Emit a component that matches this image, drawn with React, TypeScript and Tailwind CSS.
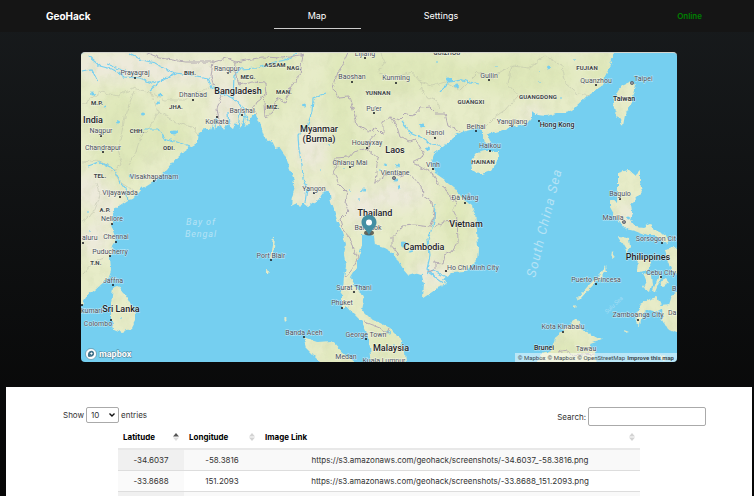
import React from "react";

type Anchor = "start" | "middle" | "end";
type Place = [name: string, x: number, y: number, anchor?: Anchor];

const LAND = [
  // Mainland, from the Indian coast round to Fujian
  "M78 48V307L82 305L88 295L95 290L103 283L109 276L111 270L110 257L116 237L112 225L113 212L117 207L128 200L133 199L142 188L155 180L167 170L177 157L183 152L190 147L197 143L199 133L205 129L210 129L212 124L214 129L222 125L224 130L227 124L233 129L236 121L239 129L243 120L246 127L250 122L252 115L257 115L260 122L263 133L267 142L272 141L276 149L280 148L285 155L287 160L289 167L293 177L295 188L292 197L291 206L297 203L300 207L303 203L308 207L313 203L318 200L322 194L325 190L330 193L331 202L334 210L337 220L342 232L346 245L344 255L346 265L344 277L343 288L341 295L341 305L343 309L347 306L353 313L362 322L367 333L370 347L372 365H406L405 352L400 338L390 328L378 322L370 318L362 310L364 300L360 292L353 283L351 277L357 267L359 255L362 245L362 235L368 234L374 236L375 245L385 248L392 252L397 258L402 268L408 275L414 273L422 275L424 284L423 298L432 292L437 288L446 285L443 279L452 273L465 272L477 260L478 248L477 230L475 215L472 205L462 198L455 188L445 180L435 173L431 162L435 152L445 145L452 137L462 132L478 128L483 131L483 140L487 144L490 140L488 135L498 132L512 127L528 123L532 118L532 110L538 115L547 116L556 113L565 113L575 107L588 95L603 85L605 76L608 70L615 52V48Z",
  // Hainan
  "M471 160L477 153L485 151L498 151L499 156L495 164L491 171L482 174L472 170Z",
  // Taiwan
  "M633 81L636 85L633 98L629 108L625 115L623 126L620 120L615 113L613 103L617 93L622 86Z",
  // Sri Lanka
  "M113 288L118 286L127 298L135 313L135 321L131 329L121 332L114 329L111 318L111 304Z",
  // Sumatra
  "M303 337L318 342L332 341L342 352L357 365H323L314 356L306 348Z",
  // Borneo
  "M535 365L542 353L552 350L555 338L565 330L572 322L577 319L582 328L591 334L602 340L590 344L595 352L597 365Z",
  // Luzon
  "M618 173L628 170L635 176L640 171L640 182L642 192L635 199L631 205L632 213L630 220L635 226L643 227L650 224L657 231L666 235L668 245L661 241L657 236L648 236L640 233L635 231L626 229L621 223L614 214L610 207L610 200L617 202L618 188Z",
  // Visayas and Mindoro
  "M618 237L629 238L630 248L627 252Z",
  "M638 258L649 258L652 263L647 270L637 273Z",
  "M643 273L651 275L652 285L650 292L643 287L646 281Z",
  "M659 275L661 278L655 292L653 290Z",
  "M660 282L666 279L669 283L662 286Z",
  "M664 250L680 247V276L672 270L668 262Z",
  // Mindanao
  "M680 291L672 295L669 305L661 306L657 297L650 299L641 304L637 313L636 323L640 326L642 314L649 310L655 312L662 308L663 320L668 329L680 333Z",
  // Palawan
  "M605 266L606 272L596 282L579 300L577 299L588 286L602 272Z",
  // Andaman and Nicobar
  "M273 237L275 240L272 259L270 258Z",
  "M267 270L270 271L269 274L267 273Z",
  "M284 317L287 319L285 321Z",
  "M612 252L615 256L611 259Z",
  "M574 305L576 307L574 308Z",
  "M624 330L629 332L625 333Z",
  "M661 356L664 355L666 359L663 360Z",
];

const PLAINS: [number, number, number, number][] = [
  [120, 66, 55, 15],
  [180, 72, 50, 14],
  [228, 105, 18, 24],
  [108, 208, 11, 16],
  [90, 190, 18, 18],
  [312, 148, 16, 22],
  [315, 196, 22, 11],
  [362, 208, 18, 18],
  [400, 195, 26, 14],
  [432, 274, 18, 13],
  [440, 138, 12, 9],
  [532, 114, 13, 8],
  [95, 240, 15, 18],
  [628, 215, 9, 14],
];

const HILLS: [number, number, number, number][] = [
  [120, 135, 28, 45],
  [165, 135, 26, 18],
  [272, 75, 22, 40],
  [342, 90, 16, 45],
  [400, 72, 70, 22],
  [520, 75, 55, 20],
  [345, 150, 18, 22],
  [455, 220, 14, 35],
  [395, 262, 10, 12],
  [600, 72, 15, 18],
  [385, 340, 12, 16],
  [565, 350, 20, 12],
  [335, 355, 12, 8],
];

const BORDERS = [
  "M140 50L160 58L185 62L213 62L226 58L236 62L235 72L239 85L252 82L265 83L266 95L256 102L253 108L257 115",
  "M213 62L211 76L214 88L222 96L217 108L220 126",
  "M236 62L262 57L283 58L305 54",
  "M303 54L300 75L290 88L286 102L277 97L272 112L265 118L264 104L265 95",
  "M349 50L342 66L338 72L333 88L338 97L349 96L354 112L357 125L368 132L377 128L383 134L383 122L391 118L400 120L406 114L415 115L421 108L430 107L436 113L445 113L448 126L462 132",
  "M391 118L397 127L400 137L410 142L415 140L423 152L421 158L413 162L422 168L432 173L438 183L445 188L449 197L457 202L453 210L457 218L458 242L452 252L445 255L443 264L435 262L435 270L427 272",
  "M377 132L368 142L368 150L378 158L376 172L375 184L388 173L400 176L408 173L414 180L422 185L423 196L432 202L434 218L430 227L415 225L402 226L397 233L392 237L392 246L398 255",
  "M368 148L353 152L349 157L335 158L337 166L333 172L339 184L347 192L345 202L349 211L340 220L343 230L350 238L353 248L358 258L353 267L345 277",
  "M364 322L372 325L380 328L387 333L389 328",
  "M558 352L567 350L572 356L582 355L595 354",
  "M434 227L444 222L454 221",
];

const STATES = [
  "M82 105L100 92L118 96L132 88L150 92L164 100L185 100L196 92L210 88",
  "M134 92L126 112L122 132L118 150L122 165L110 172",
  "M150 92L158 112L150 128L140 138L136 152L128 165",
  "M158 112L176 122L194 128L199 134",
  "M82 162L98 160L112 168L118 180L133 190",
  "M82 222L94 212L100 196L96 182",
  "M82 275L94 262L104 258",
  "M380 50L386 62L378 72L392 78L412 72L420 82L432 86L445 82L460 90L478 72L492 78L512 66L530 68L545 56",
  "M420 82L424 94L436 102L440 108",
  "M512 66L508 84L518 96L506 110L494 118L484 128",
  "M545 56L562 66L566 84L578 94L590 96",
];

const RIVERS = [
  "M88 56L100 66L115 70L124 77L140 78L152 83L165 79L175 73L192 75L208 78L212 88L224 94L232 98L240 104L245 111L248 122",
  "M130 54L142 60L155 63L168 70L177 74",
  "M106 64L122 70L138 75",
  "M150 90L162 80L176 74",
  "M297 53L286 60L275 62L258 68L240 69L234 76L233 98",
  "M143 129L158 129L164 138L178 142L190 147",
  "M88 166L100 162L112 168L118 178L126 189L128 200",
  "M326 93L313 98L312 112L308 124L298 135L299 150L302 165L303 178L307 188L305 203",
  "M402 122L412 134L422 138L432 145L445 147",
  "M435 205L434 222L428 240L430 255L427 268L436 278",
  "M440 92L450 82L462 80L478 84",
  "M82 72L92 70L97 80",
];

const DELTAS = [
  "M428 272L445 284",
  "M432 270L446 277",
  "M216 118L215 129",
  "M228 112L229 128",
  "M240 112L238 128",
  "M245 112L243 125",
];

const LAKES: [number, number, number][] = [
  [174, 133, 3], [157, 102, 2], [143, 114, 2], [118, 122, 2], [93, 94, 2],
  [105, 107, 2], [160, 95, 2], [101, 150, 1], [88, 121, 1], [131, 176, 2],
  [304, 105, 2], [384, 165, 2], [398, 166, 2], [396, 180, 2], [399, 187, 2],
  [363, 190, 2], [359, 200, 1], [380, 170, 1], [404, 245, 3], [411, 251, 2],
  [422, 125, 2], [427, 148, 2], [449, 80, 3], [457, 86, 2], [437, 62, 1],
  [548, 68, 2], [541, 71, 1], [575, 60, 1], [497, 66, 1], [521, 98, 1],
  [540, 82, 1], [350, 190, 1], [329, 145, 1], [344, 168, 1], [320, 170, 1],
  [628, 218, 2], [388, 332, 2], [394, 345, 1], [122, 318, 1], [102, 218, 1],
  [90, 231, 1], [88, 212, 1], [560, 98, 1], [500, 120, 1], [470, 98, 1],
];

const COUNTRIES: Place[] = [
  ["Bangladesh", 238, 94],
  ["India", 93, 123],
  ["Myanmar", 319, 132],
  ["(Burma)", 319, 142],
  ["Laos", 395, 153],
  ["Thailand", 375, 216],
  ["Vietnam", 466, 227],
  ["Cambodia", 424, 250],
  ["Sri Lanka", 121, 312],
  ["Malaysia", 391, 351],
  ["Philippines", 648, 260],
];

const TERRITORIES: Place[] = [
  ["Taiwan", 624, 101],
  ["Hong Kong", 557, 127],
  ["Brunei", 544, 350],
];

const REGIONS: Place[] = [
  ["BIH.", 190, 75], ["ASSAM", 275, 67], ["NAG.", 294, 70], ["MEG.", 248, 79],
  ["MAN.", 284, 94], ["MIZ.", 273, 109], ["JHA.", 176, 109], ["M.P.", 97, 105],
  ["CHH.", 137, 133], ["ODI.", 169, 150], ["TEL.", 100, 178], ["A.P.", 105, 212],
  ["T.N.", 96, 265], ["YUNNAN", 378, 95], ["GUANGXI", 471, 104],
  ["GUANGDONG", 538, 99], ["FUJIAN", 587, 70], ["HAINAN", 483, 164],
  ["GUIZHOU", 447, 55],
];

const CITIES: Place[] = [
  ["Prayagraj", 135, 75], ["Rangpur", 227, 71], ["Dhanbad", 193, 97],
  ["Barishal", 242, 113], ["Kolkata", 217, 124], ["Nagpur", 101, 133],
  ["Chandrapur", 103, 150], ["Visakhapatnam", 154, 179], ["Vijayawada", 120, 195],
  ["Nellore", 112, 221], ["Chennai", 116, 239], ["aluru", 82, 240, "start"],
  ["Puducherry", 110, 254], ["Jaffna", 113, 283], ["kumari", 81, 313, "start"],
  ["Colombo", 98, 326], ["Port Blair", 271, 258], ["Banda Aceh", 304, 335],
  ["Medan", 346, 359], ["George Town", 366, 337], ["Phuket", 342, 305],
  ["Surat Thani", 354, 290], ["Bangkok", 368, 230], ["Yangon", 314, 191],
  ["Chiang Mai", 350, 165], ["Houayxay", 367, 145], ["Vientiane", 395, 175],
  ["Baoshan", 352, 79], ["Kunming", 396, 80], ["Pu'er", 374, 111],
  ["Lijiang", 365, 56], ["Hanoi", 435, 135], ["Vinh", 433, 167],
  ["Đà Nẵng", 465, 200], ["Ho Chi Minh City", 447, 270, "start"],
  ["Guilin", 489, 78], ["Beihai", 476, 129], ["Yangjiang", 512, 124],
  ["Haikou", 490, 148], ["Quanzhou", 596, 83], ["Taipei", 634, 81, "start"],
  ["Baguio", 620, 196], ["Manila", 613, 220], ["Sorsogon Cit", 676, 241, "end"],
  ["Cebu City", 661, 275], ["Puerto Princesa", 596, 282],
  ["Zamboanga City", 638, 317], ["Da", 668, 315, "start"],
  ["B", 672, 291, "start"], ["Kuala Lumpur", 384, 363],
  ["Kota Kinabalu", 563, 329], ["Tawau", 586, 351],
];

const DOTS: [number, number][] = [
  [135, 78], [228, 73], [193, 100], [242, 115], [217, 117], [101, 136],
  [103, 152], [154, 181], [120, 197], [112, 224], [116, 242], [83, 243],
  [110, 256], [113, 285], [82, 305], [111, 320], [271, 260], [304, 337],
  [366, 339], [342, 308], [354, 292], [314, 193], [350, 167], [367, 148],
  [352, 82], [396, 83], [374, 113], [365, 58], [435, 138], [433, 169],
  [465, 203], [446, 271], [489, 80], [476, 131], [512, 126], [490, 151],
  [596, 85], [539, 121], [620, 199], [662, 243], [661, 277], [596, 284],
  [638, 320], [563, 332],
];

const CAPITALS: [number, number][] = [[632, 83], [394, 178], [624, 222]];

function Labels({ items, className }: { items: Place[]; className: string }) {
  return (
    <g className={className}>
      {items.map(([name, x, y, anchor]) => (
        <text key={name} x={x} y={y} textAnchor={anchor ?? "middle"}>
          {name}
        </text>
      ))}
    </g>
  );
}

function MapView() {
  return (
    <div className="relative overflow-hidden rounded border-t border-[#d5d5cf] bg-[#75cff0] font-['Roboto','Noto_Sans',sans-serif]">
      <svg
        viewBox="81 53 596 309"
        className="block w-full"
        role="img"
        aria-label="Map of Southeast Asia"
      >
        <defs>
          <filter id="coast" x="0" y="0" width="100%" height="100%">
            <feTurbulence type="fractalNoise" baseFrequency="0.16" numOctaves="3" seed="4" result="n" />
            <feDisplacementMap in="SourceGraphic" in2="n" scale="5" xChannelSelector="R" yChannelSelector="G" />
          </filter>
          <filter id="relief" x="0" y="0" width="100%" height="100%">
            <feTurbulence type="fractalNoise" baseFrequency="0.09 0.06" numOctaves="4" seed="9" />
            <feColorMatrix values="0 0 0 0 0.62  0 0 0 0 0.68  0 0 0 0 0.42  1.6 0 0 0 -0.68" />
          </filter>
          <filter id="soft">
            <feGaussianBlur stdDeviation="7" />
          </filter>
          <clipPath id="land">
            <path d={LAND.join("")} />
          </clipPath>
        </defs>
        <g filter="url(#coast)">
          <path d={LAND.join("")} fill="#e7ecc8" />
          <g clipPath="url(#land)">
            <g filter="url(#soft)">
              {HILLS.map(([x, y, rx, ry]) => (
                <ellipse key={`${x}-${y}`} cx={x} cy={y} rx={rx} ry={ry} fill="#dfe8ba" />
              ))}
              {PLAINS.map(([x, y, rx, ry]) => (
                <ellipse key={`${x}-${y}`} cx={x} cy={y} rx={rx} ry={ry} fill="#edeadb" />
              ))}
            </g>
            <rect x="81" y="50" width="600" height="315" filter="url(#relief)" opacity="0.5" />
          </g>
          <g fill="none" stroke="#b9bca8" strokeWidth="0.6" opacity="0.8">
            {STATES.map((d) => <path key={d} d={d} />)}
          </g>
          <g fill="none" stroke="#75cff0" strokeWidth="1.2">
            {RIVERS.map((d) => <path key={d} d={d} />)}
            {DELTAS.map((d) => <path key={d} d={d} />)}
          </g>
          <g fill="#75cff0">
            {LAKES.map(([x, y, r]) => (
              <ellipse key={`${x}-${y}`} cx={x} cy={y} rx={r} ry={r * 0.8} />
            ))}
          </g>
          <g fill="none" stroke="#b3aab4" strokeWidth="1">
            {BORDERS.map((d) => <path key={d} d={d} />)}
          </g>
        </g>

        <g className="fill-[#b5e3f5] text-[9px] italic tracking-widest">
          <text x="201" y="225" textAnchor="middle">Bay of</text>
          <text x="201" y="237" textAnchor="middle">Bengal</text>
        </g>
        <text
          className="fill-[#b5e3f5] text-[13px] italic tracking-widest"
          transform="translate(535 278) rotate(-76)"
        >
          South China Sea
        </text>
        <text className="fill-[#a5def5] text-[6px] italic" transform="translate(607 314) rotate(-43)">
          Sulu Sea
        </text>

        <g fill="#22262b">
          {DOTS.map(([x, y]) => <circle key={`${x}-${y}`} cx={x} cy={y} r="1.1" />)}
        </g>
        <g fill="#8e929c" stroke="#4c525c" strokeWidth="0.7">
          {CAPITALS.map(([x, y]) => <circle key={`${x}-${y}`} cx={x} cy={y} r="1.6" />)}
        </g>
        <Labels
          items={CITIES}
          className="fill-[#4a505a] stroke-white/60 text-[7px] [paint-order:stroke] [stroke-width:1px]"
        />
        <Labels
          items={REGIONS}
          className="fill-[#3d4446] stroke-white/50 text-[6px] font-bold tracking-wide [paint-order:stroke] [stroke-width:1px]"
        />
        <Labels
          items={TERRITORIES}
          className="fill-[#23282c] stroke-white/60 text-[7px] font-medium [paint-order:stroke] [stroke-width:1px]"
        />
        <Labels
          items={COUNTRIES}
          className="fill-[#1d2226] stroke-white/60 text-[9px] font-medium [paint-order:stroke] [stroke-width:1px]"
        />

        <g>
          <ellipse cx="369" cy="233" rx="5" ry="2.4" fill="#3c3a35" opacity="0.75" />
          <path
            d="M369 215C364.700 215 361.500 218.200 361.500 222.300C361.500 227 366 229.500 369 235C372 229.500 376.500 227 376.500 222.300C376.500 218.200 373.300 215 369 215Z"
            fill="#448fa3"
          />
          <circle cx="369" cy="222.500" r="3" fill="#fff" />
        </g>
      </svg>

      <a href="#mapbox" className="absolute bottom-0.5 left-1 flex items-center gap-0.5 text-white">
        <svg viewBox="0 0 12 12" className="size-3" aria-hidden="true">
          <circle cx="6" cy="6" r="5.500" fill="#fff" stroke="#4a7f96" strokeWidth="0.600" />
          <path d="M3.200 8.800C2.500 6.500 3 4.400 4.300 3.400C5.800 2.300 7.800 2.600 8.700 4C9.500 5.400 9.100 7.100 7.900 8C6.600 8.900 4.600 9 3.200 8.800Z" fill="#44748a" />
          <path d="M6.400 3.900L6.900 5.100L8.100 5.600L6.900 6.100L6.400 7.300L5.900 6.100L4.700 5.600L5.900 5.100Z" fill="#fff" />
        </svg>
        <span className="font-['Roboto',sans-serif] text-[9px] leading-3 font-bold [-webkit-text-stroke:1px_#4a7f96] [paint-order:stroke]">
          mapbox
        </span>
      </a>
      <div className="absolute right-0 bottom-0 flex gap-0.5 bg-white/50 px-[3px] text-[6px] leading-[9px] text-[#3f4a50]">
        <a href="#maps">© Mapbox</a>
        <a href="#about">© Mapbox</a>
        <a href="#osm">© OpenStreetMap</a>
        <a href="#improve" className="font-bold">Improve this map</a>
      </div>
    </div>
  );
}

function SortIcon({ active = false }: { active?: boolean }) {
  return (
    <svg viewBox="0 0 6 10" className="h-2.5 w-1.5" aria-hidden="true">
      <path d="M3 1L6 4.500H0Z" fill={active ? "#555" : "#d3d3d3"} />
      <path d="M3 9L6 5.500H0Z" fill={active ? "#dcdcdc" : "#d3d3d3"} />
    </svg>
  );
}

const ROWS = [
  ["-34.6037", "-58.3816", "https://s3.amazonaws.com/geohack/screenshots/-34.6037_-58.3816.png"],
  ["-33.8688", "151.2093", "https://s3.amazonaws.com/geohack/screenshots/-33.8688_151.2093.png"],
  ["", "", ""],
];

const COLUMNS = ["Latitude", "Longitude", "Image Link"];

function Records() {
  return (
    <section className="bg-white pt-5 pr-[46px] pl-[57px] text-[8px] text-[#333]">
      <div className="flex items-start justify-between">
        <label className="flex items-center gap-0.5">
          Show
          <span className="relative flex">
            <select
              defaultValue="10"
              className="h-4 w-[33px] appearance-none rounded-xs border border-[#aaa] pl-1 text-[8px]"
            >
              <option>10</option>
              <option>25</option>
              <option>50</option>
            </select>
            <svg viewBox="0 0 6 4" className="pointer-events-none absolute top-1.5 right-1 h-1 w-1.5" aria-hidden="true">
              <path d="M0.500 0.500L3 3L5.500 0.500" fill="none" stroke="#111" strokeWidth="1.400" />
            </svg>
          </span>
          entries
        </label>
        <label className="flex items-center gap-0.5">
          Search:
          <input type="search" className="h-[19px] w-[118px] rounded-xs border border-[#aaa] px-1" />
        </label>
      </div>
      <table className="mx-[55px] w-[calc(100%-121px)] table-fixed border-collapse">
        <colgroup>
          <col className="w-[66px]" />
          <col className="w-[76px]" />
          <col />
        </colgroup>
        <thead>
          <tr className="h-[23px] border-b-2 border-[#e8e8e8] text-black">
            {COLUMNS.map((name, i) => (
              <th key={name} className="px-[5px] text-left font-bold">
                <span className="flex items-center justify-between">
                  {name}
                  <SortIcon active={i === 0} />
                </span>
              </th>
            ))}
          </tr>
        </thead>
        <tbody>
          {ROWS.map(([lat, lng, link]) => (
            <tr key={lat} className="group h-[21px] border-b border-[#ddd] text-center odd:bg-[#f9f9f9]">
              <td className="bg-[#fafafa] group-odd:bg-[#f0f0f0]">{lat}</td>
              <td>{lng}</td>
              <td>{link}</td>
            </tr>
          ))}
        </tbody>
      </table>
    </section>
  );
}

export default function App() {
  return (
    <div className="h-screen overflow-hidden bg-linear-to-b from-[#181b1d] to-[#060606] font-['Inter','Liberation_Sans',sans-serif]">
      <header className="bg-[#151515] pr-0.5 pl-1.5">
        <nav className="grid h-8 grid-cols-[1fr_auto_1fr] items-center pr-[50px] pl-10 text-[9px] text-white">
          <h1 className="text-[10px] font-bold">GeoHack</h1>
          <div className="flex gap-[37px] pl-2.5 text-center leading-[25px]">
            <a href="#map" className="w-[87px] border-b border-[#ccc]">Map</a>
            <a href="#settings" className="w-[87px] border-b border-transparent">Settings</a>
          </div>
          <span className="text-right text-[8px] font-semibold text-[#008000]">Online</span>
        </nav>
      </header>
      <main className="pr-0.5 pl-1.5">
        <div className="px-[75px] pt-5 pb-[25px]">
          <MapView />
        </div>
        <Records />
      </main>
    </div>
  );
}
